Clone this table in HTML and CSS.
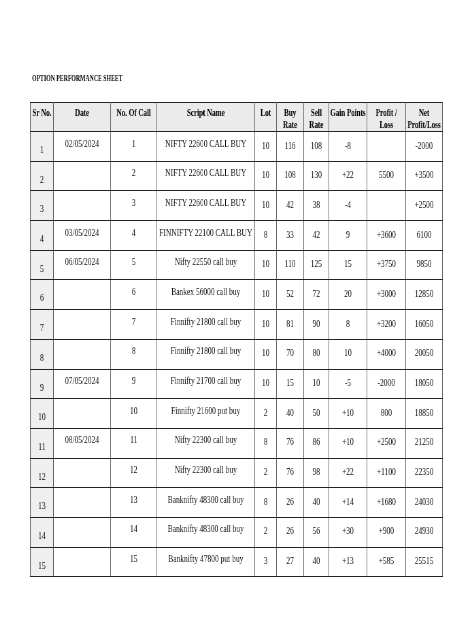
FILE: index.html
```html
<!DOCTYPE html>
<html lang="en">
<head>
<meta charset="utf-8">
<title>Option Performance Sheet</title>
<link rel="stylesheet" href="styles.css">
</head>
<body>
<div class="page">
<div class="sheet">
  <div class="title">OPTION PERFORMANCE SHEET</div>
  <table class="grid">
    <colgroup>
      <col class="c-sr"><col class="c-date"><col class="c-call"><col class="c-script"><col class="c-lot"><col class="c-buy"><col class="c-sell"><col class="c-gain"><col class="c-pl"><col class="c-net">
    </colgroup>
    <thead>
      <tr>
        <th>Sr No.</th><th>Date</th><th>No. Of Call</th><th>Script Name</th><th>Lot</th><th>Buy<br>Rate</th><th>Sell<br>Rate</th><th>Gain Points</th><th>Profit /<br>Loss</th><th>Net<br>Profit/Loss</th>
      </tr>
    </thead>
    <tbody>
      <tr><td class="sr">1</td><td class="a">02/05/2024</td><td class="a">1</td><td class="a">NIFTY 22600 CALL BUY</td><td class="b">10</td><td class="b">116</td><td class="b">108</td><td class="b">-8</td><td class="b"></td><td class="b">-2000</td></tr>
      <tr><td class="sr">2</td><td class="a"></td><td class="a">2</td><td class="a">NIFTY 22600 CALL BUY</td><td class="b">10</td><td class="b">108</td><td class="b">130</td><td class="b">+22</td><td class="b">5500</td><td class="b">+3500</td></tr>
      <tr><td class="sr">3</td><td class="a"></td><td class="a">3</td><td class="a">NIFTY 22600 CALL BUY</td><td class="b">10</td><td class="b">42</td><td class="b">38</td><td class="b">-4</td><td class="b"></td><td class="b">+2500</td></tr>
      <tr><td class="sr">4</td><td class="a">03/05/2024</td><td class="a">4</td><td class="a">FINNIFTY 22100 CALL BUY</td><td class="b">8</td><td class="b">33</td><td class="b">42</td><td class="b">9</td><td class="b">+3600</td><td class="b">6100</td></tr>
      <tr><td class="sr">5</td><td class="a">06/05/2024</td><td class="a">5</td><td class="a">Nifty 22550 call buy</td><td class="b">10</td><td class="b">110</td><td class="b">125</td><td class="b">15</td><td class="b">+3750</td><td class="b">9850</td></tr>
      <tr><td class="sr">6</td><td class="a"></td><td class="a">6</td><td class="a">Bankex 56000 call buy</td><td class="b">10</td><td class="b">52</td><td class="b">72</td><td class="b">20</td><td class="b">+3000</td><td class="b">12850</td></tr>
      <tr><td class="sr">7</td><td class="a"></td><td class="a">7</td><td class="a">Finnifty 21800 call buy</td><td class="b">10</td><td class="b">81</td><td class="b">90</td><td class="b">8</td><td class="b">+3200</td><td class="b">16050</td></tr>
      <tr><td class="sr">8</td><td class="a"></td><td class="a">8</td><td class="a">Finnifty 21800 call buy</td><td class="b">10</td><td class="b">70</td><td class="b">80</td><td class="b">10</td><td class="b">+4000</td><td class="b">20050</td></tr>
      <tr><td class="sr">9</td><td class="a">07/05/2024</td><td class="a">9</td><td class="a">Finnifty 21700 call buy</td><td class="b">10</td><td class="b">15</td><td class="b">10</td><td class="b">-5</td><td class="b">-2000</td><td class="b">18050</td></tr>
      <tr><td class="sr">10</td><td class="a"></td><td class="a">10</td><td class="a">Finnifty 21600 put buy</td><td class="b">2</td><td class="b">40</td><td class="b">50</td><td class="b">+10</td><td class="b">800</td><td class="b">18850</td></tr>
      <tr><td class="sr">11</td><td class="a">08/05/2024</td><td class="a">11</td><td class="a">Nifty 22300 call buy</td><td class="b">8</td><td class="b">76</td><td class="b">86</td><td class="b">+10</td><td class="b">+2500</td><td class="b">21250</td></tr>
      <tr><td class="sr">12</td><td class="a"></td><td class="a">12</td><td class="a">Nifty 22300 call buy</td><td class="b">2</td><td class="b">76</td><td class="b">98</td><td class="b">+22</td><td class="b">+1100</td><td class="b">22350</td></tr>
      <tr><td class="sr">13</td><td class="a"></td><td class="a">13</td><td class="a">Banknifty 48300 call buy</td><td class="b">8</td><td class="b">26</td><td class="b">40</td><td class="b">+14</td><td class="b">+1680</td><td class="b">24030</td></tr>
      <tr><td class="sr">14</td><td class="a"></td><td class="a">14</td><td class="a">Banknifty 48300 call buy</td><td class="b">2</td><td class="b">26</td><td class="b">56</td><td class="b">+30</td><td class="b">+900</td><td class="b">24930</td></tr>
      <tr><td class="sr">15</td><td class="a"></td><td class="a">15</td><td class="a">Banknifty 47800 put buy</td><td class="b">3</td><td class="b">27</td><td class="b">40</td><td class="b">+13</td><td class="b">+585</td><td class="b">25515</td></tr>
    </tbody>
  </table>
</div>
</div>
</body>
</html>
```

FILE: styles.css
```css
html, body {
  margin: 0;
  padding: 0;
  background: #ffffff;
  overflow: hidden;
}

.page {
  width: 474px;
  height: 632px;
  overflow: hidden;
}

.sheet {
  width: 606px;
  margin-left: 30px;
  padding-top: 72px;
  transform: scaleX(0.68);
  transform-origin: 0 0;
  will-change: transform;
  font-family: "Liberation Serif", "Times New Roman", serif;
  color: #111111;
}

.title {
  font-size: 8.5px;
  font-weight: bold;
  line-height: 12px;
  margin: 0 0 18px 3px;
  color: #000000;
}

.grid {
  width: 606px;
  border-collapse: collapse;
  table-layout: fixed;
}

.c-sr { width: 34px; }
.c-date { width: 84px; }
.c-call { width: 68px; }
.c-script { width: 144px; }
.c-lot { width: 32px; }
.c-buy { width: 40px; }
.c-sell { width: 37px; }
.c-gain { width: 56px; }
.c-pl { width: 57px; }
.c-net { width: 54px; }

.grid th,
.grid td {
  border-top: 1px solid #222222;
  border-bottom: 1px solid #222222;
  border-left: 1.4px solid #666666;
  border-right: 1.4px solid #666666;
  text-align: center;
  vertical-align: top;
  padding: 0;
  line-height: 12px;
  font-size: 11px;
  white-space: nowrap;
}

.grid th {
  height: 29px;
  box-sizing: border-box;
  padding-top: 4px;
  font-size: 10.6px;
  font-weight: bold;
  background: #ebebeb;
  color: #000000;
  letter-spacing: -0.1px;
}

.grid td {
  height: 29.7px;
  box-sizing: border-box;
}

.grid td.a { padding-top: 4.5px; }
.grid td.b { padding-top: 6.5px; }
.grid td.sr {
  padding-top: 11px;
  background: #efefef;
}
```
